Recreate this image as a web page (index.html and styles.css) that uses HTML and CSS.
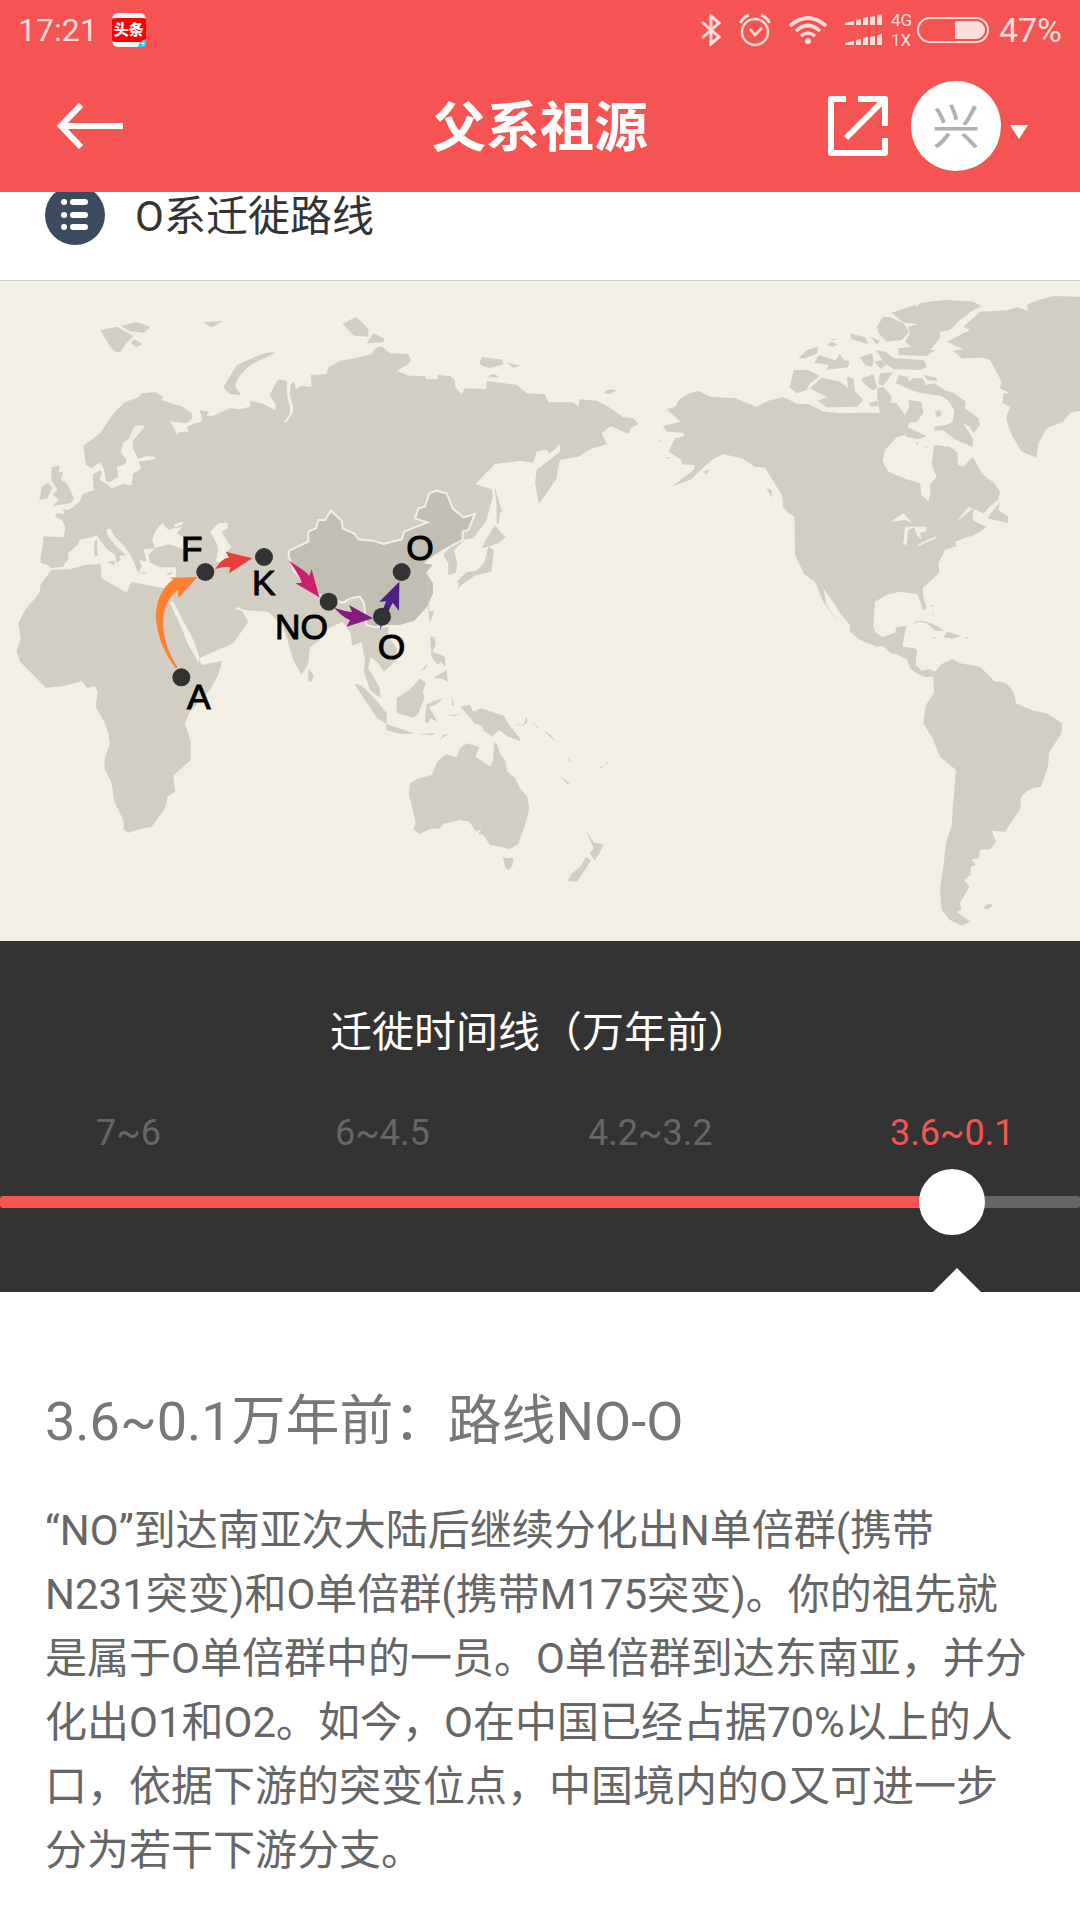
FILE: index.html
```html
<!DOCTYPE html>
<html lang="zh-CN">
<head>
<meta charset="utf-8">
<meta name="viewport" content="width=device-width, initial-scale=1">
<title>父系祖源</title>
<link rel="stylesheet" href="styles.css">
</head>
<body>
<header class="top">
  <div class="status">
    <span class="clock">17:21</span>
    <span class="news">头条<svg class="bolt" viewBox="0 0 8 8" aria-hidden="true"><path d="M8 0v8H0Q1 2 8 0z" fill="#2cc5f5"/><path d="M6 1 3 5h2L4 8l3-4H5z" fill="#fff"/></svg></span>
    <div class="status-icons">
      <svg class="i-bt" viewBox="0 0 20 32" aria-hidden="true"><path d="M1 8l17 15-8 7V2l8 7L1 24" fill="none" stroke="currentColor" stroke-width="3"/></svg>
      <svg class="i-alarm" viewBox="0 0 32 34" aria-hidden="true"><g fill="none" stroke="currentColor"><circle cx="16" cy="19" r="13" stroke-width="2.4"/><path d="M11 16l5 6 7-7" stroke-width="2.6"/><path d="M1.500 10Q4 4 10 2M30.500 10Q28 4 22 2" stroke-width="3"/></g></svg>
      <svg class="i-wifi" viewBox="0 0 38 28" aria-hidden="true"><g fill="none" stroke="currentColor" stroke-width="3.600"><path d="M1 10q18-16 36 0"/><path d="M7 15q12-11 24 0"/><path d="M12 20q7-6 14 0"/></g><circle cx="19" cy="25" r="3" fill="currentColor"/></svg>
      <svg class="i-signal" viewBox="0 0 38 32" aria-hidden="true"><path fill="currentColor" d="M0 11V9l9-2v4zM11 11V6l5-1v6zM18 11V4l5-1v8zM25 11V3l5-1v9zM32 11V1l5-1v11z"/><path fill="currentColor" d="M0 31v-2l9-2v4zM11 31v-5l5-1v6zM18 31v-7l5-1v8zM25 31v-8l5-1v9zM32 31V21l5-1v11z"/></svg>
      <span class="net"><span>4G</span><span>1X</span></span>
      <svg class="i-battery" viewBox="0 0 72 26" aria-hidden="true"><rect x="1" y="1" width="70" height="24" rx="12" fill="none" stroke="currentColor" stroke-width="2"/><path d="M38 4h21a9 9 0 0 1 0 18H38z" fill="currentColor"/></svg>
      <span class="pct">47%</span>
    </div>
  </div>
  <nav class="bar">
    <button class="back" type="button" aria-label="返回"><svg viewBox="0 0 66 46" aria-hidden="true"><path d="M24 2 4 23l20 21M4 23h62" fill="none" stroke="#fff" stroke-width="6"/></svg></button>
    <h1 class="title">父系祖源</h1>
    <div class="actions">
      <button class="share" type="button" aria-label="分享"><svg viewBox="0 0 60 60" aria-hidden="true"><path d="M18 3H3v54h54V42M30 3h27v27M57 3 18 42" fill="none" stroke="#fff" stroke-width="6" stroke-linejoin="round"/></svg></button>
      <button class="user" type="button" aria-label="切换用户"><span class="avatar">兴</span><span class="caret"></span></button>
    </div>
  </nav>
</header>
<main>
  <section class="section-head">
    <svg class="list-icon" viewBox="0 0 60 60" aria-hidden="true"><circle cx="30" cy="30" r="30" fill="#3b4a5f"/><g stroke="#fff" stroke-width="6" stroke-linecap="round"><path d="M19 17h.1M28 17h12M19 30h.1M28 30h12M19 42h.1M28 42h12"/></g></svg>
    <h2 class="section-title">O系迁徙路线</h2>
  </section>
  <svg class="map" viewBox="0 3 3240 1980" role="img" aria-label="O系迁徙路线图">
    <path class="land" d="M130 769L190 772 196 745 188 722 165 708 170 700 192 702 190 688 205 690 222 680 240 662 248 642 282 630 278 585 302 570 305 582 298 600 320 612 335 625 370 612 395 616 400 580 418 570 412 545 350 560 355 590 330 606 320 606 312 570 300 546 275 564 258 555 250 497 270 482 300 460 320 430 345 395 375 367 415 352 425 340 465 336 490 350 485 360 520 372 545 378 575 400 577 415 560 430 520 425 508 420 525 450 530 465 540 455 565 455 562 440 585 430 605 425 605 408 598 390 627 395 620 408 640 407 690 385 720 388 750 380 752 362 790 372 825 390 828 375 808 345 825 315 835 298 860 303 862 350 870 385 868 405 850 427 860 426 878 398 880 382 870 345 872 315 882 303 888 328 905 318 935 320 932 285 980 282 985 262 1020 243 1070 233 1115 222 1125 205 1145 198 1170 220 1225 222 1233 240 1225 252 1190 272 1225 287 1275 288 1280 298 1312 298 1315 285 1350 288 1365 300 1365 320 1385 342 1395 325 1458 327 1460 303 1550 315 1580 340 1635 343 1645 367 1720 367 1735 380 1738 358 1790 362 1825 380 1870 412 1900 415 1915 432 1892 445 1885 462 1832 438 1805 460 1820 493 1770 508 1735 530 1680 540 1673 570 1670 595 1640 640 1617 670 1605 610 1610 570 1680 515 1680 493 1648 522 1640 508 1610 515 1600 548 1560 543 1485 552 1425 612 1475 628 1478 650 1460 720 1420 775 1395 778 1362 812 1372 850 1368 878 1345 885 1345 850 1330 825 1350 800 1310 824 1278 848 1305 852 1282 878 1302 910 1302 940 1285 980 1245 1025 1200 1038 1165 1042 1165 1070 1190 1105 1190 1140 1152 1175 1135 1150 1112 1130 1105 1165 1138 1220 1142 1255 1110 1230 1092 1175 1095 1140 1085 1085 1057 1098 1050 1055 1028 1025 985 1045 960 1080 930 1102 925 1150 905 1185 880 1140 850 1040 805 995 730 990 712 980 690 1005 670 1000 640 950 650 938 690 985 725 992 745 1025 700 1090 597 1135 605 1155 667 1142 655 1185 630 1230 570 1295 555 1330 572 1385 572 1440 520 1487 525 1535 503 1550 495 1585 455 1640 420 1647 385 1658 372 1650 370 1620 343 1565 335 1510 313 1465 315 1430 330 1392 325 1360 315 1330 287 1280 293 1235 285 1218 262 1225 245 1203 190 1218 137 1223 95 1180 60 1145 50 1112 62 1075 55 1030 75 990 118 940 122 912 155 870 210 868 255 855 302 852 305 895 340 915 380 937 395 905 440 915 510 928 528 890 528 862 480 862 450 848 445 825 465 805 430 808 440 845 418 840 425 860 415 880 395 832 375 800 345 770 330 745 318 750 325 770 350 800 378 825 358 828 362 840 350 848 345 825 318 805 290 765 275 772 240 778 235 792 205 820 205 838 188 860 152 865 145 856 122 848 122 830 128 795z"/>
    <g class="sea">
      <path d="M435 440Q410 430 400 445L388 475 368 490 363 520 378 535 378 550 360 560 352 595 392 615 400 580 425 565 415 545 465 538 465 530 440 528 415 536 398 505 400 480z"/>
      <path d="M488 730Q465 745 457 780L465 805 505 793 560 810 580 812 550 772 530 760 548 740 520 745 505 750zM550 724l-25 8-3 10 25-8z"/>
      <path d="M683 728L655 730 630 755 650 790 655 810 648 845 690 845 680 815 695 800 682 785 665 755 683 745z"/>
      <path d="M508 965L545 1045 563 1090 596 1150 598 1130 580 1080 538 1000 520 965z"/>
    </g>
    <g class="land">
      <path d="M300 150l50-10 50 28-20 20-20 28h-12l-15-12zM363 138l45-12 44 14-20 18-42-4zM392 188l12-10 24 14-20 10zM610 127l60-5-20 12-14 8-16-8z"/>
      <path d="M825 220Q815 210 770 228L710 256 670 322 690 343 723 345 705 318Q715 280 760 250z"/>
      <path d="M155 562l25-5-5 18 15 3-8 20 20 15 20 42-10 14-55 10 20-20-20-15 15-15-18-28zM125 620l20-12 12 15-15 32-25 5 5-18z"/>
      <path d="M282 582l18-6-2 20 6 14-12 4-10-12zM283 785l8-8 2 50-10 3zM320 845l25-3-2 14zM418 876l25 2-12 4zM498 882l20-8-8 12z"/>
      <path d="M1028 132l40-22 38 38-2 22-42-3zM1100 190l20-30 34 16-5 10zM1438 245l10-14 60 8v15l-40 10-25-8zM1520 247l42 10-22 7zM1465 292q14-20 32 0zM1813 336q16-14 34-4-14 14-34 8z"/>
      <path d="M652 560l8 40-28 103-20 8-16-22 8-75 30-20zM926 1165l16 22-8 20-10-5z"/>
      <path d="M1484 620l22 75-8 5v25l-8 10v-60zM1485 735l20 25 12 10-20 18-32 12-20 5 15-30zM1465 800l17 10-8 65-50 12-35 25-20-5 30-30 30-5 25-25zM1375 900l18 3-18 25z"/>
    </g>
    <path class="china" d="M865 825L868 812 925 785 925 755 948 745 955 720 975 720 993 692 1025 722 1028 745 1065 762 1075 778 1120 782 1150 792 1205 778 1212 755 1282 727 1245 715 1255 685 1275 680 1288 640 1310 632 1340 640 1358 685 1390 712 1425 702 1405 750 1388 755 1388 780 1350 800 1310 824 1278 848 1305 852 1282 878 1302 910 1302 940 1285 980 1245 1025 1200 1038 1165 1038 1125 1042 1100 1035 1095 1000 1092 970 1080 950 1050 955 1030 968 980 955 930 930 880 870z"/>
    <g class="land" transform="translate(900 840)">
      <path d="M163 372l20 3 50 50 27 35v33l-30-20zM258 492l85 28-42 2-42-12zM352 522l55-2-10 6zM370 530l22 8M415 540l15-15 22-6zM375 3L388 155l14-5-6 25-8 14zM362 335l20-25-4 15zM290 415l38-25 32-35 18 15-10 25 5 20-20 50-15 8-48-15zM375 487l5-55 50-18-25 22-18 4 25 45-20-10-8 15zM390 230h15l2 25-10 20 38 15 2 30-15-15-8 10-20-25zM405 350l35-20 3 35-18-10-18 2zM455 408l8 30-8-5zM440 465l45-2-25 5z"/>
      <path d="M480 440l30-5 10 20 22-10 70 22 10 20 35 45 5 12-40-15-25-20-20 20-25-15-5-15-25-10-10-15zM640 492l30 2 10-25 3 18-15 10zM695 485l25 22-8-2zM730 512l22 12 15 22-22-20zM803 588l12 20-8-5zM780 648l28 22-4 5zM898 622l12-5-5 10zM915 610l14-6-8 8z"/>
      <path d="M330 670L350 658 395 645 412 605 438 582 470 592 480 565 498 550 537 560 527 590 570 620 580 600 582 550 590 550 602 585 615 600 622 635 645 655 660 685 682 710 688 745 678 785 655 852 628 868 605 860 570 855 550 825 535 822 545 805 528 815 508 785 480 780 430 792 420 805 390 807 360 822 340 808 347 790 335 735 327 705z"/>
      <path d="M608 890l12 5 20-2-2 22-12 15-10-6zM858 813l25 35 28 5-12 25-15 25-15-25 12-12zM858 892l15 8-22 35-20 30-28-2 12-22 25-20z"/>
    </g>
    <g class="land" transform="translate(1920 0)">
      <path d="M80 388L105 380 120 357 145 341 175 332 210 350 285 355 350 380 385 362 430 352 460 365 470 372 505 372 550 395 600 400 680 398 720 400 712 355 712 325 730 320 755 350 752 368 770 370 795 405 808 380 805 360 845 365 850 400 830 425 808 428 795 465 770 472 735 510 728 545 745 575 800 598 840 610 845 645 865 665 872 640 868 615 890 590 875 553 882 495 930 500 952 518 955 555 970 560 998 530 1025 580 1065 612 1080 635 1075 658 1050 680 1030 700 985 680 950 725 1000 685 998 720 1040 742 985 770 945 785 950 798 915 810 895 850 898 878 848 925 850 950 860 985 850 992 832 942 780 935 740 945 705 965 700 1040 705 1055 728 1072 765 1058 770 1040 800 1038 790 1080 788 1100 825 1105 830 1110 826 1160 850 1178 870 1170 890 1175 880 1188 858 1192 840 1185 810 1165 802 1140 775 1125 750 1118 730 1098 710 1100 660 1080 630 1055 630 1035 600 1000 585 975 550 925 560 975 590 1020 590 1022 550 965 525 905 492 882 465 825 463 710 430 680 425 645 375 563 345 560 305 535 250 523 215 540 150 600 95 620 160 570 165 555 125 553 125 540 85 515 105 475 133 468 130 458 80 455 68 438 122 425z"/>
      <path d="M448 322L462 270 505 270 540 288 510 310 500 330 470 340zM510 325l35-32 55 12 25 20-5-35 20 5 5 40 25 25-20 20-90 2-28-20 30-10zM475 235l25-25 35-10-3 20-35 15zM522 248l15-22 50 15 12-20 12 18 18 5-5 18-68 8 12-15zM560 195l15-10 18 8-15 8zM565 176l28 0-12 5zM630 160l45 12 10 20-50-14zM692 170l28 12-10 12zM658 232l38-12 5 20-5 20-20-5zM705 245l20-5 12 15-15 12zM707 210l30 5 25 20 90 5 10 20-20 10-80-2-30-20-12-20z"/>
      <path d="M710 140L730 110 750 112 790 130 808 155 785 180 740 185 715 160zM755 98L825 75 830 82 840 68 920 60 1000 65 1025 78 1000 90 960 120 930 150 900 155 900 175 870 210 885 210 860 228 775 225 775 205 812 200 795 185 810 160 805 140 835 132 790 128z"/>
      <path d="M665 295l35-12 12 40-15 8-30-25zM720 280l40-3-20 25-10 15-15-5zM768 310l10-25 25 5 5 15 10-10 30 0 10 20 25-5 30 20 30 10 35 25-3 20 40 30 5 20-20 25-10-20-20-10 30 50-2 20-50-20-40-30-25 2 0-12 35-5 20-10 5-35-20-30-20-12-60-8-30-10zM850 285l38 8 5 10-30-2zM885 395l15-5 5 15-15 8zM800 440l60 28-25 10-38-8zM825 490l12-5-5 10zM855 497l8 5-5 5zM380 625l15 5 0 25zM425 675l20 5 30 35-30-15zM190 575l20-8-12 18zM685 370l25-8 8 15-25 3zM1080 665l-5 25 30 20-2 20-60-15 10-15zM1000 755l40-20-20 20-32 18z"/>
      <path d="M920 185L990 150 970 140 1020 95 1105 90 1130 82 1165 92 1160 75 1195 60 1240 48 1320 50 1320 392 1290 398 1270 425 1220 445 1195 490 1190 533 1145 515 1115 465 1098 415 1110 380 1088 370 1090 340 1110 340 1080 325 1085 305 1050 240 1030 233 965 235 940 212 970 208z"/>
      <path d="M55 480l8 2-5 3zM77 532l16 0-8 5zM870 975l18 2-18 3zM878 990l4 20-4-8z"/>
    </g>
    <g class="sea" transform="translate(1920 0)"><path d="M753 725L790 700 818 730 795 720zM795 740L860 740 858 755 840 758 845 778 830 765 822 742 805 750 800 795 790 792zM832 795l35-18 25-10-5 8-50 22z"/></g>
    <g class="land" transform="translate(2280 930)">
      <path d="M440 182L470 180 467 225 485 242 510 237 525 245 545 222 578 207 600 220 660 230 665 235 705 275Q750 270 765 320L768 340 820 362 860 370 905 400Q911 430 890 452L868 485 864 530 843 590Q800 592 782 625L782 655 735 725 695 722 708 755 690 778 660 780 658 805 635 808 648 825 632 830 632 855 612 870 628 890 600 940 605 960 590 965 632 995 605 1007 570 990 545 960 540 900 550 830 558 760 575 705 578 655 588 540 540 500 518 445 490 400 498 345 522 310 520 265 510 245 490 258 470 250 450 235z"/>
      <path d="M458 102Q485 75 552 123L525 122 500 100 480 95zM562 125l40 13-25 8-27-4zM515 142l18 2-12 3zM615 142h14l-10 4zM670 955l10-12 20 0-15 15z"/>
    </g>
    <path d="M527 1165C450 1060 450 950 520 898L508 893 592 891 536 954 533 930C470 980 480 1080 533 1162z" fill="#ff8030"/>
    <path d="M645 868Q670 830 688 834L677 815 757 835 687 880 692 862Q670 858 645 868z" fill="#e63e3e"/>
    <path d="M866 842Q920 875 928 887L935 868 958 952 886 910 906 908Q890 870 866 842z" fill="#cb1f70"/>
    <path d="M1003 983Q1030 993 1056 996L1047 975 1119 1015 1040 1040 1050 1021Q1020 1005 1003 983z" fill="#851a80"/>
    <path d="M1198 905L1197 992 1178 968Q1155 1010 1140 1050 1142 1000 1158 964L1138 965z" fill="#4d1f82"/>
    <g fill="#333"><circle cx="544" cy="1192" r="27"/><circle cx="616" cy="876" r="27"/><circle cx="792" cy="831" r="27"/><circle cx="986" cy="965" r="27"/><circle cx="1146" cy="1010" r="27"/><circle cx="1205" cy="876" r="27"/></g>
    <g class="labels"><text x="543" y="842">F</text><text x="756" y="946">K</text><text x="825" y="1077">NO</text><text x="1133" y="1137">O</text><text x="1219" y="840">O</text><text x="561" y="1287">A</text></g>
  </svg>
  <section class="timeline">
    <h2 class="timeline-title"><label for="period">迁徙时间线（万年前）</label></h2>
    <div class="periods">
      <span>7~6</span><span>6~4.5</span><span>4.2~3.2</span><span class="active">3.6~0.1</span>
    </div>
    <input class="slider" id="period" type="range" min="0" max="1000" value="906">
    <div class="pointer"></div>
  </section>
  <article class="story">
    <h2 class="story-title">3.6~0.1万年前：路线NO-O</h2>
    <p class="story-text">“NO”到达南亚次大陆后继续分化出N单倍群(携带N231突变)和O单倍群(携带M175突变)。你的祖先就是属于O单倍群中的一员。O单倍群到达东南亚，并分化出O1和O2。如今，O在中国已经占据70%以上的人口，依据下游的突变位点，中国境内的O又可进一步分为若干下游分支。</p>
  </article>
</main>
</body>
</html>
```

FILE: styles.css
```css
* {
  box-sizing: border-box;
}

body {
  margin: 0;
  background: #fff;
  font-family: Roboto, "Noto Sans CJK SC", sans-serif;
  color: #333;
}

h1, h2, p {
  margin: 0;
  font-weight: 400;
}

svg {
  display: block;
}

button {
  padding: 0;
  border: 0;
  background: none;
  font: inherit;
}

.top {
  position: relative;
  z-index: 1;
  background: #f65452;
}

.status {
  display: flex;
  align-items: center;
  height: 60px;
  padding: 0 18px;
  color: #fddddc;
  font-size: 32px;
  line-height: 60px;
}

.news {
  position: relative;
  width: 34px;
  height: 34px;
  margin-left: 14px;
  border: solid #f4f4f4;
  border-width: 5px 0;
  border-radius: 6px;
  background: #f00;
  color: #fff;
  font-size: 15px;
  font-weight: 900;
  line-height: 24px;
  text-align: center;
}

.bolt {
  position: absolute;
  right: 0;
  bottom: -5px;
  width: 8px;
  height: 8px;
}

.status-icons {
  display: flex;
  align-items: center;
  margin-left: auto;
}

.i-bt {
  width: 20px;
  height: 32px;
}

.i-alarm {
  width: 32px;
  height: 34px;
  margin-left: 18px;
}

.i-wifi {
  width: 38px;
  height: 28px;
  margin-left: 18px;
}

.i-signal {
  width: 38px;
  height: 32px;
  margin-left: 18px;
}

.net {
  display: flex;
  flex-direction: column;
  width: 26px;
  margin-left: 8px;
  font-size: 17px;
  line-height: 20px;
}

.i-battery {
  width: 72px;
  height: 26px;
}

.pct {
  margin-left: 10px;
  font-size: 34px;
}

.bar {
  display: grid;
  grid-template-columns: 1fr auto 1fr;
  align-items: center;
  height: 132px;
  padding: 0 52px;
}

.back {
  justify-self: start;
  margin-left: 5px;
}

.back svg {
  width: 66px;
  height: 46px;
}

.title {
  padding-top: 6px;
  color: #fff;
  font-size: 54px;
  font-weight: 700;
  line-height: 80px;
}

.actions {
  display: flex;
  align-items: center;
  justify-content: flex-end;
  gap: 23px;
}

.share svg {
  width: 60px;
  height: 60px;
}

.user {
  display: flex;
  align-items: center;
  gap: 9px;
}

.avatar {
  width: 90px;
  height: 90px;
  padding-top: 2px;
  border-radius: 50%;
  background: #fff;
  color: #b0b0b0;
  font-size: 48px;
  line-height: 90px;
}

.caret {
  width: 18px;
  height: 14px;
  margin-top: 12px;
  background: #fff;
  clip-path: polygon(0 0, 100% 0, 50% 100%);
}

.section-head {
  display: flex;
  align-items: center;
  gap: 30px;
  height: 89px;
  padding: 0 45px 42px;
  border-bottom: 1px solid #ccc;
}

.list-icon {
  flex: none;
  width: 60px;
  height: 60px;
}

.section-title {
  padding-top: 3px;
  font-size: 42px;
  line-height: 60px;
}

.map {
  width: 100%;
  height: auto;
  background: #f3efe4;
}

.land {
  fill: #d3cec3;
}

.sea {
  fill: #f3efe4;
}

.china {
  fill: #c3beb3;
  stroke: #f3efe4;
  stroke-width: 6px;
}

.labels {
  fill: #000;
  stroke: #000;
  stroke-width: 3px;
  font-family: "Liberation Sans", sans-serif;
  font-size: 106px;
}

.timeline {
  position: relative;
  padding-top: 62px;
  background: #333;
}

.timeline-title {
  color: #fff;
  font-size: 42px;
  line-height: 60px;
  text-align: center;
}

.periods {
  display: grid;
  grid-template-columns: 239fr 253fr 302fr 190fr;
  padding: 46px 0 0 96px;
  color: #666;
  font-size: 36px;
  line-height: 48px;
}

.active {
  color: #f65452;
}

.slider {
  display: block;
  width: 100%;
  height: 66px;
  margin: 12px 0 0;
  appearance: none;
  background: none;
}

.slider::-webkit-slider-runnable-track {
  height: 12px;
  border-radius: 3px;
  background: linear-gradient(90deg, #f65452 88%, #666 88%);
}

.slider::-webkit-slider-thumb {
  width: 66px;
  height: 66px;
  margin-top: -27px;
  border-radius: 50%;
  appearance: none;
  background: #fff;
}

.pointer {
  width: 48px;
  height: 24px;
  margin: 33px 99px 0 auto;
  background: #fff;
  clip-path: polygon(50% 0, 100% 100%, 0 100%);
}

.story {
  padding: 90px 52px 36px 45px;
}

.story-title {
  color: #777;
  font-size: 54px;
  line-height: 80px;
}

.story-text {
  margin-top: 37px;
  color: #666;
  font-size: 42px;
  line-height: 64px;
}
```
